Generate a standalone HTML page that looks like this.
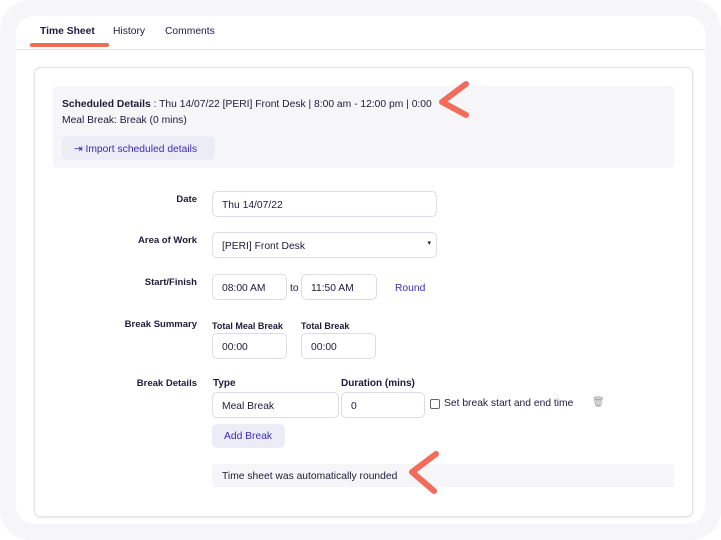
<!DOCTYPE html>
<html><head><style>
*{box-sizing:border-box;margin:0;padding:0}
body{width:721px;height:540px;background:#fff;font-family:"Liberation Sans",sans-serif;color:#1e1b3a;font-size:10.3px;position:relative;overflow:hidden}
.a{position:absolute}
.outer{left:0;top:0;width:721px;height:540px;background:#f6f6f9;border-radius:30px}
.card{left:16px;top:16px;width:689px;height:508px;background:#fff;border-radius:18px}
.inp{position:absolute;border:1px solid #dcdce4;border-radius:5px;background:#fff;height:26px;padding:8px 9px 0;font-size:10.3px;color:#1e1b3a}
.lbl{position:absolute;font-weight:bold;font-size:9.5px;text-align:right;width:120px;left:77px}
.sub{position:absolute;font-weight:bold;font-size:9px}
</style></head><body>
<div class="a outer"></div>
<div class="a card"></div>
<div class="a" style="left:40px;top:26px;font-weight:bold;font-size:10.3px">Time Sheet</div>
<div class="a" style="left:113px;top:26px;font-size:10.3px">History</div>
<div class="a" style="left:165px;top:26px;font-size:10.3px">Comments</div>
<div class="a" style="left:30px;top:43px;width:79px;height:4px;background:#f26b5b;border-radius:2px"></div>
<div class="a" style="left:16px;top:49px;width:689px;height:1px;background:#e6e6ea"></div>
<div class="a" style="left:34px;top:67px;width:659px;height:450px;border:1px solid #e2e2e8;border-radius:6px;box-shadow:0 1px 2px rgba(0,0,0,.08)"></div>
<div class="a" style="left:53px;top:86px;width:621px;height:82px;background:#f6f6f9;border-radius:4px"></div>
<div class="a" style="left:62px;top:99px"><b>Scheduled Details</b> : Thu 14/07/22 [PERI] Front Desk | 8:00 am - 12:00 pm | 0:00</div>
<div class="a" style="left:62px;top:115px">Meal Break: Break (0 mins)</div>
<div class="a" style="left:62px;top:136px;width:153px;height:24px;background:#ececf6;border-radius:5px;color:#3b2db8;padding:7px 0 0 12px">⇥ Import scheduled details</div>
<svg class="a" style="left:430px;top:78px" width="45" height="45"><path d="M36 6 L12 24 L36 37" fill="none" stroke="#f26b5b" stroke-width="6" stroke-linecap="round" stroke-linejoin="round"/></svg>
<div class="lbl" style="top:194px">Date</div>
<div class="inp" style="left:212px;top:191px;width:225px">Thu 14/07/22</div>
<div class="lbl" style="top:235px">Area of Work</div>
<div class="inp" style="left:212px;top:232px;width:225px">[PERI] Front Desk<span style="position:absolute;right:5px;top:6px;font-size:7px">▾</span></div>
<div class="lbl" style="top:277px">Start/Finish</div>
<div class="inp" style="left:212px;top:274px;width:75px">08:00 AM</div>
<div class="a" style="left:290px;top:283px">to</div>
<div class="inp" style="left:301px;top:274px;width:76px">11:50 AM</div>
<div class="a" style="left:395px;top:283px;color:#3b2db8">Round</div>
<div class="lbl" style="top:319px">Break Summary</div>
<div class="sub" style="left:212px;top:321px">Total Meal Break</div>
<div class="sub" style="left:301px;top:321px">Total Break</div>
<div class="inp" style="left:212px;top:333px;width:75px">00:00</div>
<div class="inp" style="left:301px;top:333px;width:75px">00:00</div>
<div class="lbl" style="top:378px">Break Details</div>
<div class="sub" style="left:213px;top:378px;font-size:10px">Type</div>
<div class="sub" style="left:341px;top:378px;font-size:10px">Duration (mins)</div>
<div class="inp" style="left:212px;top:392px;width:127px">Meal Break</div>
<div class="inp" style="left:341px;top:392px;width:84px">0</div>
<div class="a" style="left:430px;top:399px;width:10px;height:10px;border:1px solid #666;border-radius:2px"></div>
<div class="a" style="left:444px;top:398px">Set break start and end time</div>
<div class="a" style="left:592px;top:397px;color:#999;font-size:10px">🗑</div>
<div class="a" style="left:212px;top:424px;width:73px;height:24px;background:#ececf6;border-radius:5px;color:#3b2db8;padding:7px 0 0 12px">Add Break</div>
<div class="a" style="left:212px;top:464px;width:462px;height:23px;background:#f6f6f9;border-radius:3px;padding:7px 0 0 10px">Time sheet was automatically rounded</div>
<svg class="a" style="left:398px;top:448px" width="50" height="50"><path d="M38 6 L14 24 L36 43" fill="none" stroke="#f26b5b" stroke-width="6" stroke-linecap="round" stroke-linejoin="round"/></svg>
</body></html>
